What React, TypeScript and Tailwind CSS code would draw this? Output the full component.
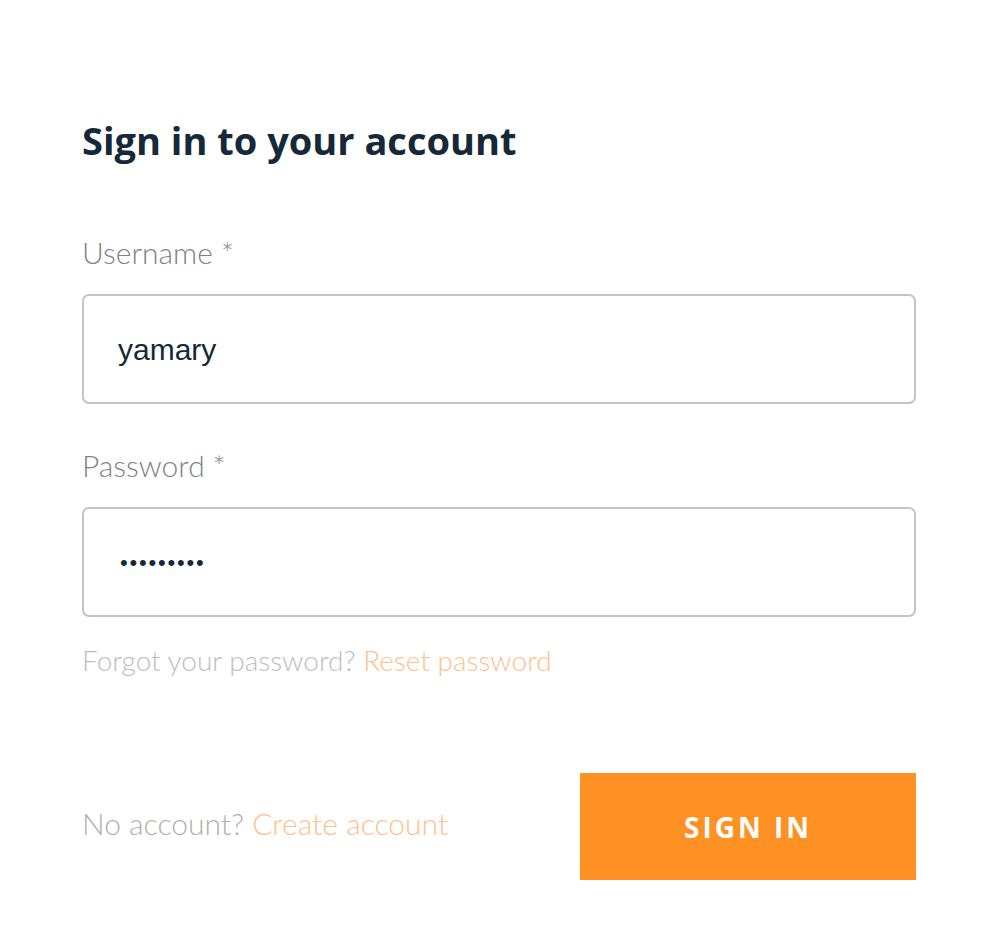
import React from "react";

export default function App() {
  return (
    <div className="min-h-[949px] w-[1000px] bg-white font-['Open_Sans',sans-serif]">
      <div className="flex flex-col pl-[82px] pr-[84px] pt-[112px]">
        <h1 className="text-[38px] leading-[56px] font-bold text-[#152939]">
          Sign in to your account
        </h1>

        <label className="mt-[64px] text-[30px] leading-[40px] font-light text-[#828282] font-['Lato',sans-serif]">
          Username *
        </label>
        <div className="mt-[22px] flex h-[110px] items-center rounded-[7px] border-2 border-[#c4c4c4] px-[34px]">
          <span className="text-[30px] text-[#152939] font-['Liberation_Sans',sans-serif]">yamary</span>
        </div>

        <label className="mt-[41px] text-[30px] leading-[40px] font-light text-[#828282] font-['Lato',sans-serif]">
          Password *
        </label>
        <div className="mt-[22px] flex h-[110px] items-center rounded-[7px] border-2 border-[#c4c4c4] px-[36px]">
          <span className="text-[22px] tracking-[1.8px] text-[#152939] font-['Liberation_Sans',sans-serif]">
            •••••••••
          </span>
        </div>

        <p className="mt-[23px] text-[28px] leading-[40px] font-light text-[#bdbdbd] font-['Lato',sans-serif]">
          Forgot your password? <span className="text-[#ffc08a]">Reset password</span>
        </p>

        <div className="mt-[93px] flex items-center justify-between">
          <p className="pb-[7px] text-[30px] leading-[40px] font-light text-[#b0b0b0] font-['Lato',sans-serif]">
            No account? <span className="text-[#ffc08a]">Create account</span>
          </p>
          <button className="flex h-[107px] w-[336px] items-center justify-center bg-[#ff9024] text-[28px] font-bold tracking-[3px] text-white">
            SIGN IN
          </button>
        </div>
      </div>
    </div>
  );
}
